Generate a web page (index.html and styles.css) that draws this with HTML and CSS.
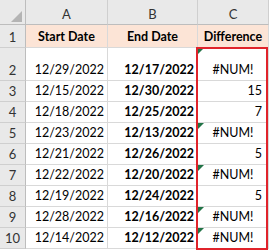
FILE: index.html
```html
<!DOCTYPE html>
<html>
<head>
<meta charset="utf-8">
<link rel="stylesheet" href="styles.css">
</head>
<body>
<div class="wrap">
<div class="sheet">
  <div class="corner"><span class="selall"></span></div>
  <div class="colhead">A</div>
  <div class="colhead">B</div>
  <div class="colhead">C</div>

  <div class="rowhead">1</div>
  <div class="cell title">Start Date</div>
  <div class="cell title">End Date</div>
  <div class="cell title">Difference</div>

  <div class="rowhead">2</div>
  <div class="cell num">12/29/2022</div>
  <div class="cell num bold">12/17/2022</div>
  <div class="cell err">#NUM!</div>

  <div class="rowhead">3</div>
  <div class="cell num">12/15/2022</div>
  <div class="cell num bold">12/30/2022</div>
  <div class="cell num diff">15</div>

  <div class="rowhead">4</div>
  <div class="cell num">12/18/2022</div>
  <div class="cell num bold">12/25/2022</div>
  <div class="cell num diff">7</div>

  <div class="rowhead">5</div>
  <div class="cell num">12/23/2022</div>
  <div class="cell num bold">12/13/2022</div>
  <div class="cell err">#NUM!</div>

  <div class="rowhead">6</div>
  <div class="cell num">12/21/2022</div>
  <div class="cell num bold">12/26/2022</div>
  <div class="cell num diff">5</div>

  <div class="rowhead">7</div>
  <div class="cell num">12/22/2022</div>
  <div class="cell num bold">12/20/2022</div>
  <div class="cell err">#NUM!</div>

  <div class="rowhead">8</div>
  <div class="cell num">12/19/2022</div>
  <div class="cell num bold">12/24/2022</div>
  <div class="cell num diff">5</div>

  <div class="rowhead">9</div>
  <div class="cell num">12/28/2022</div>
  <div class="cell num bold">12/16/2022</div>
  <div class="cell err">#NUM!</div>

  <div class="rowhead">10</div>
  <div class="cell num">12/14/2022</div>
  <div class="cell num bold">12/12/2022</div>
  <div class="cell err">#NUM!</div>
</div>
<div class="highlight"></div>
</div>
</body>
</html>
```
FILE: styles.css
```css
html, body {
  margin: 0;
  padding: 0;
  background: #ffffff;
}

.wrap {
  position: relative;
  width: 269px;
  height: 251px;
  overflow: hidden;
}

.sheet {
  display: grid;
  grid-template-columns: 26px 82px 90px 71px;
  grid-template-rows: 25px 23px 33px repeat(8, 21px);
  font-family: Lato, "Liberation Sans", sans-serif;
  font-size: 12.5px;
  color: #000000;
}

.sheet > div {
  box-sizing: border-box;
  display: flex;
  align-items: flex-end;
  padding-bottom: 3px;
  line-height: 14px;
  white-space: nowrap;
}

.corner {
  background: #e9e9e9;
  border-right: 1px solid #bdbdbd;
  border-bottom: 1px solid #bdbdbd;
  position: relative;
}

.selall {
  position: absolute;
  right: 3px;
  bottom: 2px;
  width: 0;
  height: 0;
  border-left: 11px solid transparent;
  border-bottom: 11px solid #b4b4b4;
}

.colhead {
  background: #e9e9e9;
  border-right: 1px solid #cfcfcf;
  border-bottom: 1px solid #bdbdbd;
  justify-content: center;
  color: #333333;
  font-size: 13px;
}

.rowhead {
  background: #e9e9e9;
  border-right: 1px solid #bdbdbd;
  border-bottom: 1px solid #cfcfcf;
  justify-content: center;
  color: #333333;
  font-size: 13px;
}

.cell {
  border-right: 1px solid #d9d9d9;
  border-bottom: 1px solid #d9d9d9;
  position: relative;
}

.title {
  background: #fce4d6;
  justify-content: center;
  font-weight: bold;
}

.num {
  justify-content: flex-end;
  padding-right: 3px;
}

.sheet > .diff {
  padding-right: 6px;
}

.bold {
  font-weight: bold;
}

.err {
  justify-content: center;
}

.err::before {
  content: "";
  position: absolute;
  left: 0;
  top: 0;
  width: 0;
  height: 0;
  border-top: 6px solid #217346;
  border-right: 6px solid transparent;
}

.highlight {
  position: absolute;
  left: 196px;
  top: 47px;
  width: 72px;
  height: 203px;
  box-sizing: border-box;
  border: 2px solid #e0232b;
}
```
